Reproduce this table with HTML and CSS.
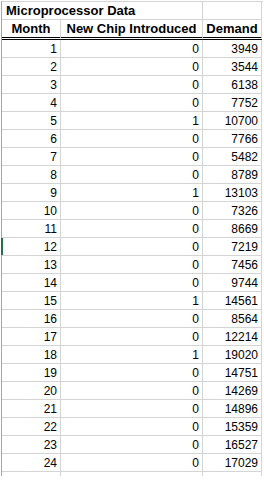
FILE: index.html
```html
<!DOCTYPE html>
<html>
<head>
<meta charset="utf-8">
<link rel="stylesheet" href="styles.css">
</head>
<body>
<div class="sheet">
  <div class="mark"></div>
  <div class="grid">
    <div class="cell title span2">Microprocessor Data</div>
    <div class="cell title"></div>

    <div class="cell head">Month</div>
    <div class="cell head">New Chip Introduced</div>
    <div class="cell head">Demand</div>

    <div class="cell num">1</div><div class="cell num">0</div><div class="cell num">3949</div>
    <div class="cell num">2</div><div class="cell num">0</div><div class="cell num">3544</div>
    <div class="cell num">3</div><div class="cell num">0</div><div class="cell num">6138</div>
    <div class="cell num">4</div><div class="cell num">0</div><div class="cell num">7752</div>
    <div class="cell num">5</div><div class="cell num">1</div><div class="cell num">10700</div>
    <div class="cell num">6</div><div class="cell num">0</div><div class="cell num">7766</div>
    <div class="cell num">7</div><div class="cell num">0</div><div class="cell num">5482</div>
    <div class="cell num">8</div><div class="cell num">0</div><div class="cell num">8789</div>
    <div class="cell num">9</div><div class="cell num">1</div><div class="cell num">13103</div>
    <div class="cell num">10</div><div class="cell num">0</div><div class="cell num">7326</div>
    <div class="cell num">11</div><div class="cell num">0</div><div class="cell num">8669</div>
    <div class="cell num">12</div><div class="cell num">0</div><div class="cell num">7219</div>
    <div class="cell num">13</div><div class="cell num">0</div><div class="cell num">7456</div>
    <div class="cell num">14</div><div class="cell num">0</div><div class="cell num">9744</div>
    <div class="cell num">15</div><div class="cell num">1</div><div class="cell num">14561</div>
    <div class="cell num">16</div><div class="cell num">0</div><div class="cell num">8564</div>
    <div class="cell num">17</div><div class="cell num">0</div><div class="cell num">12214</div>
    <div class="cell num">18</div><div class="cell num">1</div><div class="cell num">19020</div>
    <div class="cell num">19</div><div class="cell num">0</div><div class="cell num">14751</div>
    <div class="cell num">20</div><div class="cell num">0</div><div class="cell num">14269</div>
    <div class="cell num">21</div><div class="cell num">0</div><div class="cell num">14896</div>
    <div class="cell num">22</div><div class="cell num">0</div><div class="cell num">15359</div>
    <div class="cell num">23</div><div class="cell num">0</div><div class="cell num">16527</div>
    <div class="cell num">24</div><div class="cell num">0</div><div class="cell num">17029</div>

    <div class="cell stub"></div><div class="cell stub"></div><div class="cell stub"></div>
  </div>
</div>
</body>
</html>
```

FILE: styles.css
```css
html, body {
  margin: 0;
  padding: 0;
  background: #ffffff;
}

.sheet {
  position: relative;
  margin-left: 1px;
  margin-top: 1px;
  width: 261px;
  border-left: 1px solid #a6a6a6;
  font-family: "Liberation Sans", Arial, sans-serif;
  color: #000000;
}

.mark {
  position: absolute;
  left: -1px;
  top: 237px;
  width: 2px;
  height: 17px;
  background: #217346;
}

.grid {
  display: grid;
  grid-template-columns: 59px 142px 59px;
  border-top: 1px solid #d4d4d4;
}

.cell {
  height: 17px;
  border-right: 1px solid #d4d4d4;
  border-bottom: 1px solid #d4d4d4;
  box-sizing: content-box;
  font-size: 12px;
  line-height: 18px;
  white-space: nowrap;
  overflow: visible;
}

.span2 {
  grid-column: span 2;
}

.title {
  font-size: 13px;
  font-weight: bold;
  padding-left: 3px;
  height: 17px;
}

.title.span2 {
  padding-left: 4px;
}

.head {
  font-size: 13px;
  font-weight: bold;
  text-align: center;
  border-bottom: 3px double #000000;
}

.num {
  text-align: right;
  padding-right: 3px;
}

.stub {
  height: 4px;
  border-bottom: none;
}
```
